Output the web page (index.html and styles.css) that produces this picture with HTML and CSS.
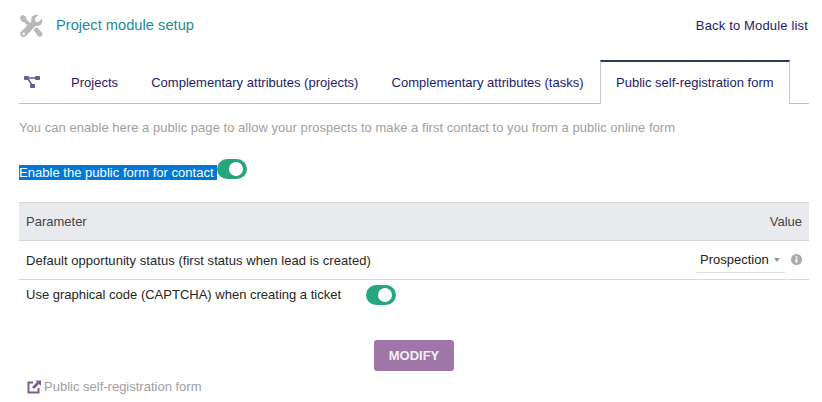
FILE: index.html
```html
<!DOCTYPE html>
<html lang="en">
<head>
<meta charset="utf-8">
<title>Project module setup</title>
<link rel="stylesheet" href="styles.css">
</head>
<body>
<header class="title-row">
  <div class="title-left">
    <svg class="tools-icon" width="24" height="24" viewBox="0 0 24 24"><g fill="#b8b8b8"><path d="M.8 3.500 3.500.8l3.300 2 .7 2.700L14.500 12.500l-2.500 2.500-7-7-2.700-.7z"/><path d="M23 4.800c.8 2.500.1 4.800-1.700 6.200-1.400 1.100-3.100 1.300-4.600.8L7 22c-1.400 1.400-3.500 1.400-4.800.2-1.400-1.400-1.300-3.500.1-4.800L12.500 7.300c-.5-1.600-.2-3.300.8-4.700C14.700.9 17 .2 19.300 1l-3.500 3.500.5 3 3 .7z"/><path d="m14.500 15.800 2.900-2.900 5.200 5.200c1.100 1.100 1.100 2.800 0 3.900-1 1-2.800 1-3.800 0z"/></g><circle cx="4.700" cy="19.700" r="1.200" fill="#fff"/></svg>
    <h1 class="page-title">Project module setup</h1>
  </div>
  <a class="back-link" href="#">Back to Module list</a>
</header>
<nav class="tabs">
  <a class="tab tab-icon" href="#"><svg width="16" height="14" viewBox="0 0 16 14"><path d="M3 3h10M4 4l4 6" stroke="#6a5a9c" stroke-width="1.500" fill="none"/><rect x="0" y="1" width="5" height="4" rx="1" fill="#6a5a9c"/><rect x="11" y="1" width="5" height="4" rx="1" fill="#6a5a9c"/><rect x="6" y="9" width="5" height="4" rx="1" fill="#6a5a9c"/></svg></a>
  <a class="tab" href="#">Projects</a>
  <a class="tab" href="#">Complementary attributes (projects)</a>
  <a class="tab" href="#">Complementary attributes (tasks)</a>
  <a class="tab tab-active" href="#">Public self-registration form</a>
</nav>
<p class="hint">You can enable here a public page to allow your prospects to make a first contact to you from a public online form</p>
<div class="enable-row"><span class="selected">Enable the public form for contact&nbsp;</span><span class="toggle"></span></div>
<div class="param-table">
  <div class="row head"><span>Parameter</span><span>Value</span></div>
  <div class="row body-row">
    <span class="status-label">Default opportunity status (first status when lead is created)</span>
    <span class="value-cell"><span class="select">Prospection<i class="caret"></i></span><svg class="info" width="11" height="11" viewBox="0 0 12 12"><circle cx="6" cy="6" r="6" fill="#aaa"/><rect x="5" y="5" width="2" height="4.500" fill="#fff"/><rect x="5" y="2.500" width="2" height="1.700" fill="#fff"/></svg></span>
  </div>
  <div class="row captcha-row"><span class="captcha-label">Use graphical code (CAPTCHA) when creating a ticket</span><span class="toggle"></span></div>
</div>
<div class="actions"><button class="modify" type="button">MODIFY</button></div>
<a class="public-link" href="#"><svg width="14" height="14" viewBox="0 0 14 14"><path d="M6 2.500H1.500v10h10V8" fill="none" stroke="#7a5f92" stroke-width="2"/><path d="M8.500.5H14V6l-2-2-5 5-2-2 5-5z" fill="#7a5f92"/></svg><span>Public self-registration form</span></a>
</body>
</html>
```
FILE: styles.css
```css
* { box-sizing: border-box; }
html, body { margin: 0; }
body { width: 822px; height: 402px; padding: 13px 13px 0 19px; overflow: hidden; background: #fff; color: #262626; font: 13px/16px "Liberation Sans", Arial, sans-serif; }
a { text-decoration: none; }
.title-row { display: flex; justify-content: space-between; align-items: center; height: 24px; }
.title-left { display: flex; align-items: center; gap: 13px; }
.tools-icon { display: block; margin-top: 2px; }
.page-title { margin: 0; font-size: 14.700px; font-weight: 400; color: #1f8a94; }
.back-link { margin: 2px 1px 0 0; color: #1e1a6b; letter-spacing: .16px; }
.tabs { display: flex; margin-top: 23px; height: 44px; width: 790px; border-bottom: 1px solid #c0c0c0; }
.tab { display: flex; align-items: center; padding: 2px 16.500px 0; color: #1e1a6b; white-space: nowrap; letter-spacing: .02px; }
.tab-icon { padding: 0 14.500px 0 5px; }
.tab-active { padding: 0 15px; border: 1px solid #c6c6c6; border-top: 2px solid #263c5c; border-bottom: 0; background: #fff; height: 44px; letter-spacing: 0; }
.hint { margin: 16px 0 0; color: #a0a0a0; letter-spacing: .035px; }
.enable-row { display: flex; align-items: flex-end; margin-top: 24px; height: 20px; }
.selected { background: #0078d7; color: #fff; line-height: 15px; height: 15px; letter-spacing: .03px; }
.toggle { display: block; width: 30px; height: 20px; border-radius: 10px; background: #27a57f; position: relative; flex: none; }
.toggle::after { content: ""; position: absolute; top: 3px; right: 4px; width: 14px; height: 14px; border-radius: 50%; background: #fff; }
.enable-row .toggle { margin-bottom: 1px; }
.param-table { width: 790px; margin-top: 22px; }
.row { display: flex; justify-content: space-between; align-items: center; padding: 0 7px; }
.head { height: 39px; background: #e9eaed; border-top: 1px solid #d8d8d8; border-bottom: 1px solid #d8d8d8; color: #444; }
.body-row { height: 39px; padding-top: 1px; border-bottom: 1px solid #d8d8d8; }
.status-label { letter-spacing: .05px; }
.captcha-row { justify-content: flex-start; height: 29px; gap: 25px; }
.value-cell { display: flex; align-items: center; gap: 4px; }
.select { display: flex; align-items: center; width: 92px; height: 24px; padding-left: 5px; border-bottom: 1px solid #ddd; border-radius: 3px; color: #222; }
.caret { margin-left: 5px; border: 3.500px solid transparent; border-top: 4px solid #999; border-bottom: 0; }
.info { display: block; margin-top: -3px; }
.actions { display: flex; justify-content: center; margin-top: 31px; }
.modify { width: 80px; height: 31px; padding: 0; border: 0; border-radius: 3px; background: #9e76a8; color: #f4eef6; font: 700 13px "Liberation Sans", Arial, sans-serif; }
.public-link { display: flex; align-items: center; gap: 3px; margin: 8px 0 0 8px; color: #a0a0a0; }
```
